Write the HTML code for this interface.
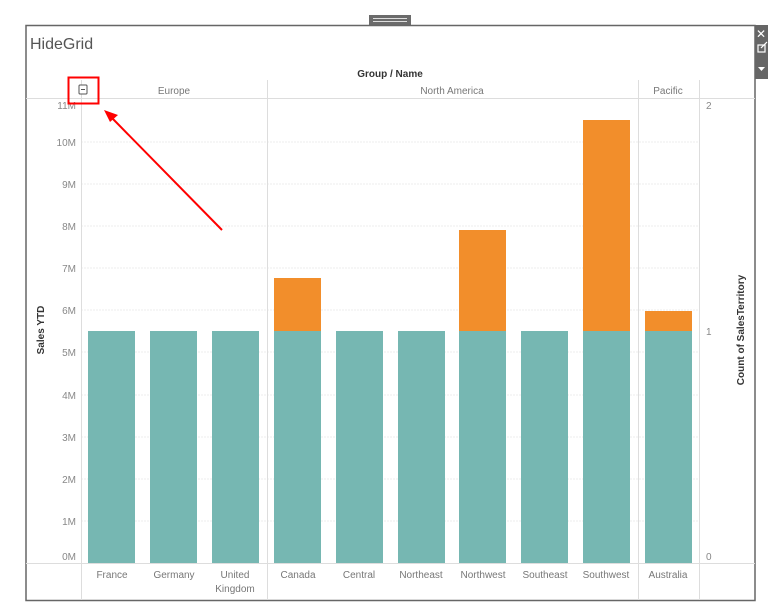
<!DOCTYPE html>
<html><head><meta charset="utf-8"><style>
html,body{margin:0;padding:0;background:#fff;width:768px;height:610px;overflow:hidden}
svg{display:block;font-family:"Liberation Sans",sans-serif}
</style></head><body>
<svg width="768" height="610" viewBox="0 0 768 610" xmlns="http://www.w3.org/2000/svg">
<rect x="369" y="15" width="42" height="10" fill="#6b6b6b"/>
<line x1="373" y1="18.5" x2="407" y2="18.5" stroke="#ddd" stroke-width="1"/>
<line x1="373" y1="21.5" x2="407" y2="21.5" stroke="#ddd" stroke-width="1"/>
<rect x="26" y="25.5" width="729" height="575" fill="#fff" stroke="#666" stroke-width="1.5"/>
<rect x="755" y="25" width="13" height="54" fill="#666"/>
<text x="756" y="38" font-size="12" fill="#fff">✕</text>
<rect x="758" y="45" width="7" height="7" fill="none" stroke="#fff" stroke-width="1.2"/>
<line x1="761" y1="48" x2="767" y2="42" stroke="#fff" stroke-width="1.2"/>
<path d="M758 67 L765 67 L761.5 71 Z" fill="#fff"/>
<text x="30" y="49" font-size="16" fill="#555">HideGrid</text>
<text x="390" y="77" font-size="10" fill="#333" font-weight="bold" text-anchor="middle">Group / Name</text>
<g font-size="10" fill="#777" text-anchor="middle">
<text x="174" y="94">Europe</text>
<text x="452" y="94">North America</text>
<text x="668" y="94">Pacific</text>
</g>
<g stroke="#eee" stroke-width="1" stroke-dasharray="2,1">
<line x1="81" y1="142" x2="700" y2="142"/><line x1="81" y1="184" x2="700" y2="184"/>
<line x1="81" y1="226" x2="700" y2="226"/><line x1="81" y1="268" x2="700" y2="268"/>
<line x1="81" y1="310" x2="700" y2="310"/><line x1="81" y1="352" x2="700" y2="352"/>
<line x1="81" y1="395" x2="700" y2="395"/><line x1="81" y1="437" x2="700" y2="437"/>
<line x1="81" y1="479" x2="700" y2="479"/><line x1="81" y1="521" x2="700" y2="521"/>
</g>
<g stroke="#ddd" stroke-width="1">
<line x1="26" y1="98.5" x2="755" y2="98.5"/>
<line x1="26" y1="563.5" x2="755" y2="563.5"/>
<line x1="81.5" y1="80" x2="81.5" y2="600"/>
<line x1="267.5" y1="80" x2="267.5" y2="600"/>
<line x1="638.5" y1="80" x2="638.5" y2="600"/>
<line x1="699.5" y1="80" x2="699.5" y2="600"/>
</g>
<g fill="#76b7b2">
<rect x="88" y="331" width="47" height="232"/>
<rect x="150" y="331" width="47" height="232"/>
<rect x="212" y="331" width="47" height="232"/>
<rect x="274" y="331" width="47" height="232"/>
<rect x="336" y="331" width="47" height="232"/>
<rect x="398" y="331" width="47" height="232"/>
<rect x="459" y="331" width="47" height="232"/>
<rect x="521" y="331" width="47" height="232"/>
<rect x="583" y="331" width="47" height="232"/>
<rect x="645" y="331" width="47" height="232"/>
</g>
<g fill="#f28e2b">
<rect x="274" y="278" width="47" height="53"/>
<rect x="459" y="230" width="47" height="101"/>
<rect x="583" y="120" width="47" height="211"/>
<rect x="645" y="311" width="47" height="20"/>
</g>
<g font-size="10" fill="#888" text-anchor="end">
<text x="76" y="109">11M</text><text x="76" y="146">10M</text><text x="76" y="188">9M</text>
<text x="76" y="230">8M</text><text x="76" y="272">7M</text><text x="76" y="314">6M</text>
<text x="76" y="356">5M</text><text x="76" y="399">4M</text><text x="76" y="441">3M</text>
<text x="76" y="483">2M</text><text x="76" y="525">1M</text><text x="76" y="560">0M</text>
</g>
<g font-size="10" fill="#888">
<text x="706" y="109">2</text><text x="706" y="335">1</text><text x="706" y="560">0</text>
</g>
<text transform="translate(44,330) rotate(-90)" font-size="10" fill="#333" font-weight="bold" text-anchor="middle">Sales YTD</text>
<text transform="translate(744,330) rotate(-90)" font-size="10" fill="#333" font-weight="bold" text-anchor="middle">Count of SalesTerritory</text>
<g font-size="10" fill="#777" text-anchor="middle">
<text x="112" y="578">France</text><text x="174" y="578">Germany</text>
<text x="235" y="578">United</text><text x="235" y="592">Kingdom</text>
<text x="298" y="578">Canada</text><text x="359" y="578">Central</text>
<text x="421" y="578">Northeast</text><text x="483" y="578">Northwest</text>
<text x="545" y="578">Southeast</text><text x="606" y="578">Southwest</text>
<text x="668" y="578">Australia</text>
</g>
<rect x="79" y="85" width="8" height="9" rx="1" fill="#fff" stroke="#555" stroke-width="1"/>
<line x1="81" y1="89.5" x2="85" y2="89.5" stroke="#555" stroke-width="1"/>
<rect x="68.5" y="77.5" width="30" height="26" fill="none" stroke="#f00" stroke-width="2"/>
<line x1="222" y1="230" x2="113" y2="119" stroke="#f00" stroke-width="2"/>
<path d="M104 110 L118 115 L110 122 Z" fill="#f00"/>
</svg>
</body></html>
